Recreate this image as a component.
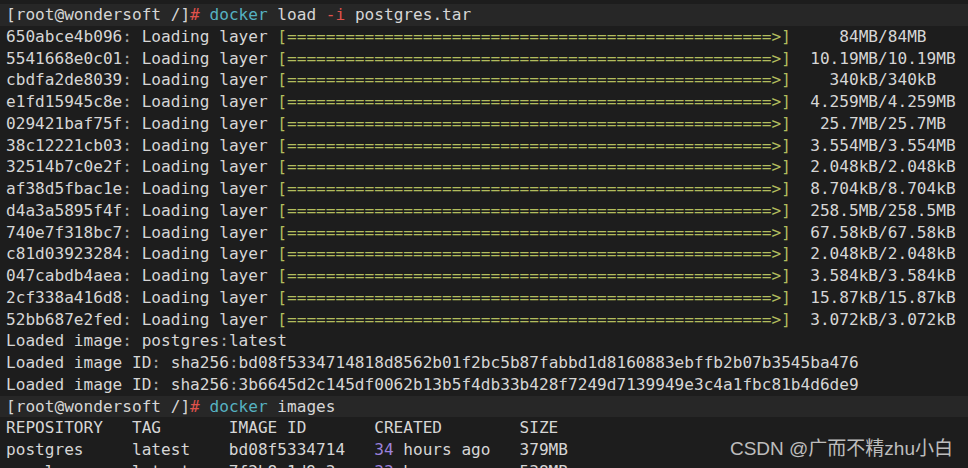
import React from "react";

type Seg = { t: string; c?: string };

const TXT = "text-[#d6d6d6]";
const DIM = "text-[#a8a8a8]";
const BAR = "text-[#b3bd5e]";
const RED = "text-[#e0524c]";
const CYAN = "text-[#56b2c2]";
const PURPLE = "text-[#9b82dc]";

const layers: [string, string, string][] = [
  ["650abce4b096", "84MB", "84MB"],
  ["5541668e0c01", "10.19MB", "10.19MB"],
  ["cbdfa2de8039", "340kB", "340kB"],
  ["e1fd15945c8e", "4.259MB", "4.259MB"],
  ["029421baf75f", "25.7MB", "25.7MB"],
  ["38c12221cb03", "3.554MB", "3.554MB"],
  ["32514b7c0e2f", "2.048kB", "2.048kB"],
  ["af38d5fbac1e", "8.704kB", "8.704kB"],
  ["d4a3a5895f4f", "258.5MB", "258.5MB"],
  ["740e7f318bc7", "67.58kB", "67.58kB"],
  ["c81d03923284", "2.048kB", "2.048kB"],
  ["047cabdb4aea", "3.584kB", "3.584kB"],
  ["2cf338a416d8", "15.87kB", "15.87kB"],
  ["52bb687e2fed", "3.072kB", "3.072kB"],
];

function pad8(s: string) {
  return " ".repeat(Math.max(0, 8 - s.length)) + s;
}

function Line({ segs, hl }: { segs: Seg[]; hl?: boolean }) {
  return (
    <div className={`h-[21.75px] leading-[21.75px] pl-[6px] whitespace-pre ${hl ? "bg-[#272727]" : ""}`}>
      {segs.map((s, i) => (
        <span key={i} className={s.c ?? TXT}>
          {s.t}
        </span>
      ))}
    </div>
  );
}

export default function App() {
  const bar = "[" + "=".repeat(50) + ">]";
  return (
    <div className="relative w-[968px] h-[468px] overflow-hidden bg-[#1d1d1d] pt-[4px] font-['DejaVu_Sans_Mono',monospace] text-[16.1px]">
      <Line
        hl
        segs={[
          { t: "[root@wondersoft /]" },
          { t: "#", c: RED },
          { t: " " },
          { t: "docker", c: CYAN },
          { t: " load " },
          { t: "-i", c: RED },
          { t: " postgres.tar" },
        ]}
      />
      {layers.map(([id, cur, tot]) => (
        <Line
          key={id}
          segs={[
            { t: id },
            { t: ":", c: DIM },
            { t: " Loading layer " },
            { t: bar, c: BAR },
            { t: " " + pad8(cur) + "/" + tot },
          ]}
        />
      ))}
      <Line segs={[{ t: "Loaded image" }, { t: ":", c: DIM }, { t: " postgres" }, { t: ":", c: DIM }, { t: "latest" }]} />
      <Line
        segs={[
          { t: "Loaded image ID" },
          { t: ":", c: DIM },
          { t: " sha256" },
          { t: ":", c: DIM },
          { t: "bd08f5334714818d8562b01f2bc5b87fabbd1d8160883ebffb2b07b3545ba476" },
        ]}
      />
      <Line
        segs={[
          { t: "Loaded image ID" },
          { t: ":", c: DIM },
          { t: " sha256" },
          { t: ":", c: DIM },
          { t: "3b6645d2c145df0062b13b5f4db33b428f7249d7139949e3c4a1fbc81b4d6de9" },
        ]}
      />
      <Line
        hl
        segs={[
          { t: "[root@wondersoft /]" },
          { t: "#", c: RED },
          { t: " " },
          { t: "docker", c: CYAN },
          { t: " images" },
        ]}
      />
      <Line segs={[{ t: "REPOSITORY   TAG       IMAGE ID       CREATED        SIZE" }]} />
      <Line
        segs={[
          { t: "postgres     latest    bd08f5334714   " },
          { t: "34", c: PURPLE },
          { t: " hours ago   379MB" },
        ]}
      />
      <Line
        segs={[
          { t: "mysql        latest    7f2b8e1d9c3a   " },
          { t: "33", c: PURPLE },
          { t: " hours ago   538MB" },
        ]}
      />
      <div className="absolute right-[15px] bottom-[7px] font-['Liberation_Sans','Noto_Sans_CJK_SC',sans-serif] text-[19px] leading-[24px] text-[#cfcfcf] opacity-90 whitespace-pre">
        CSDN @广而不精zhu小白
      </div>
    </div>
  );
}
